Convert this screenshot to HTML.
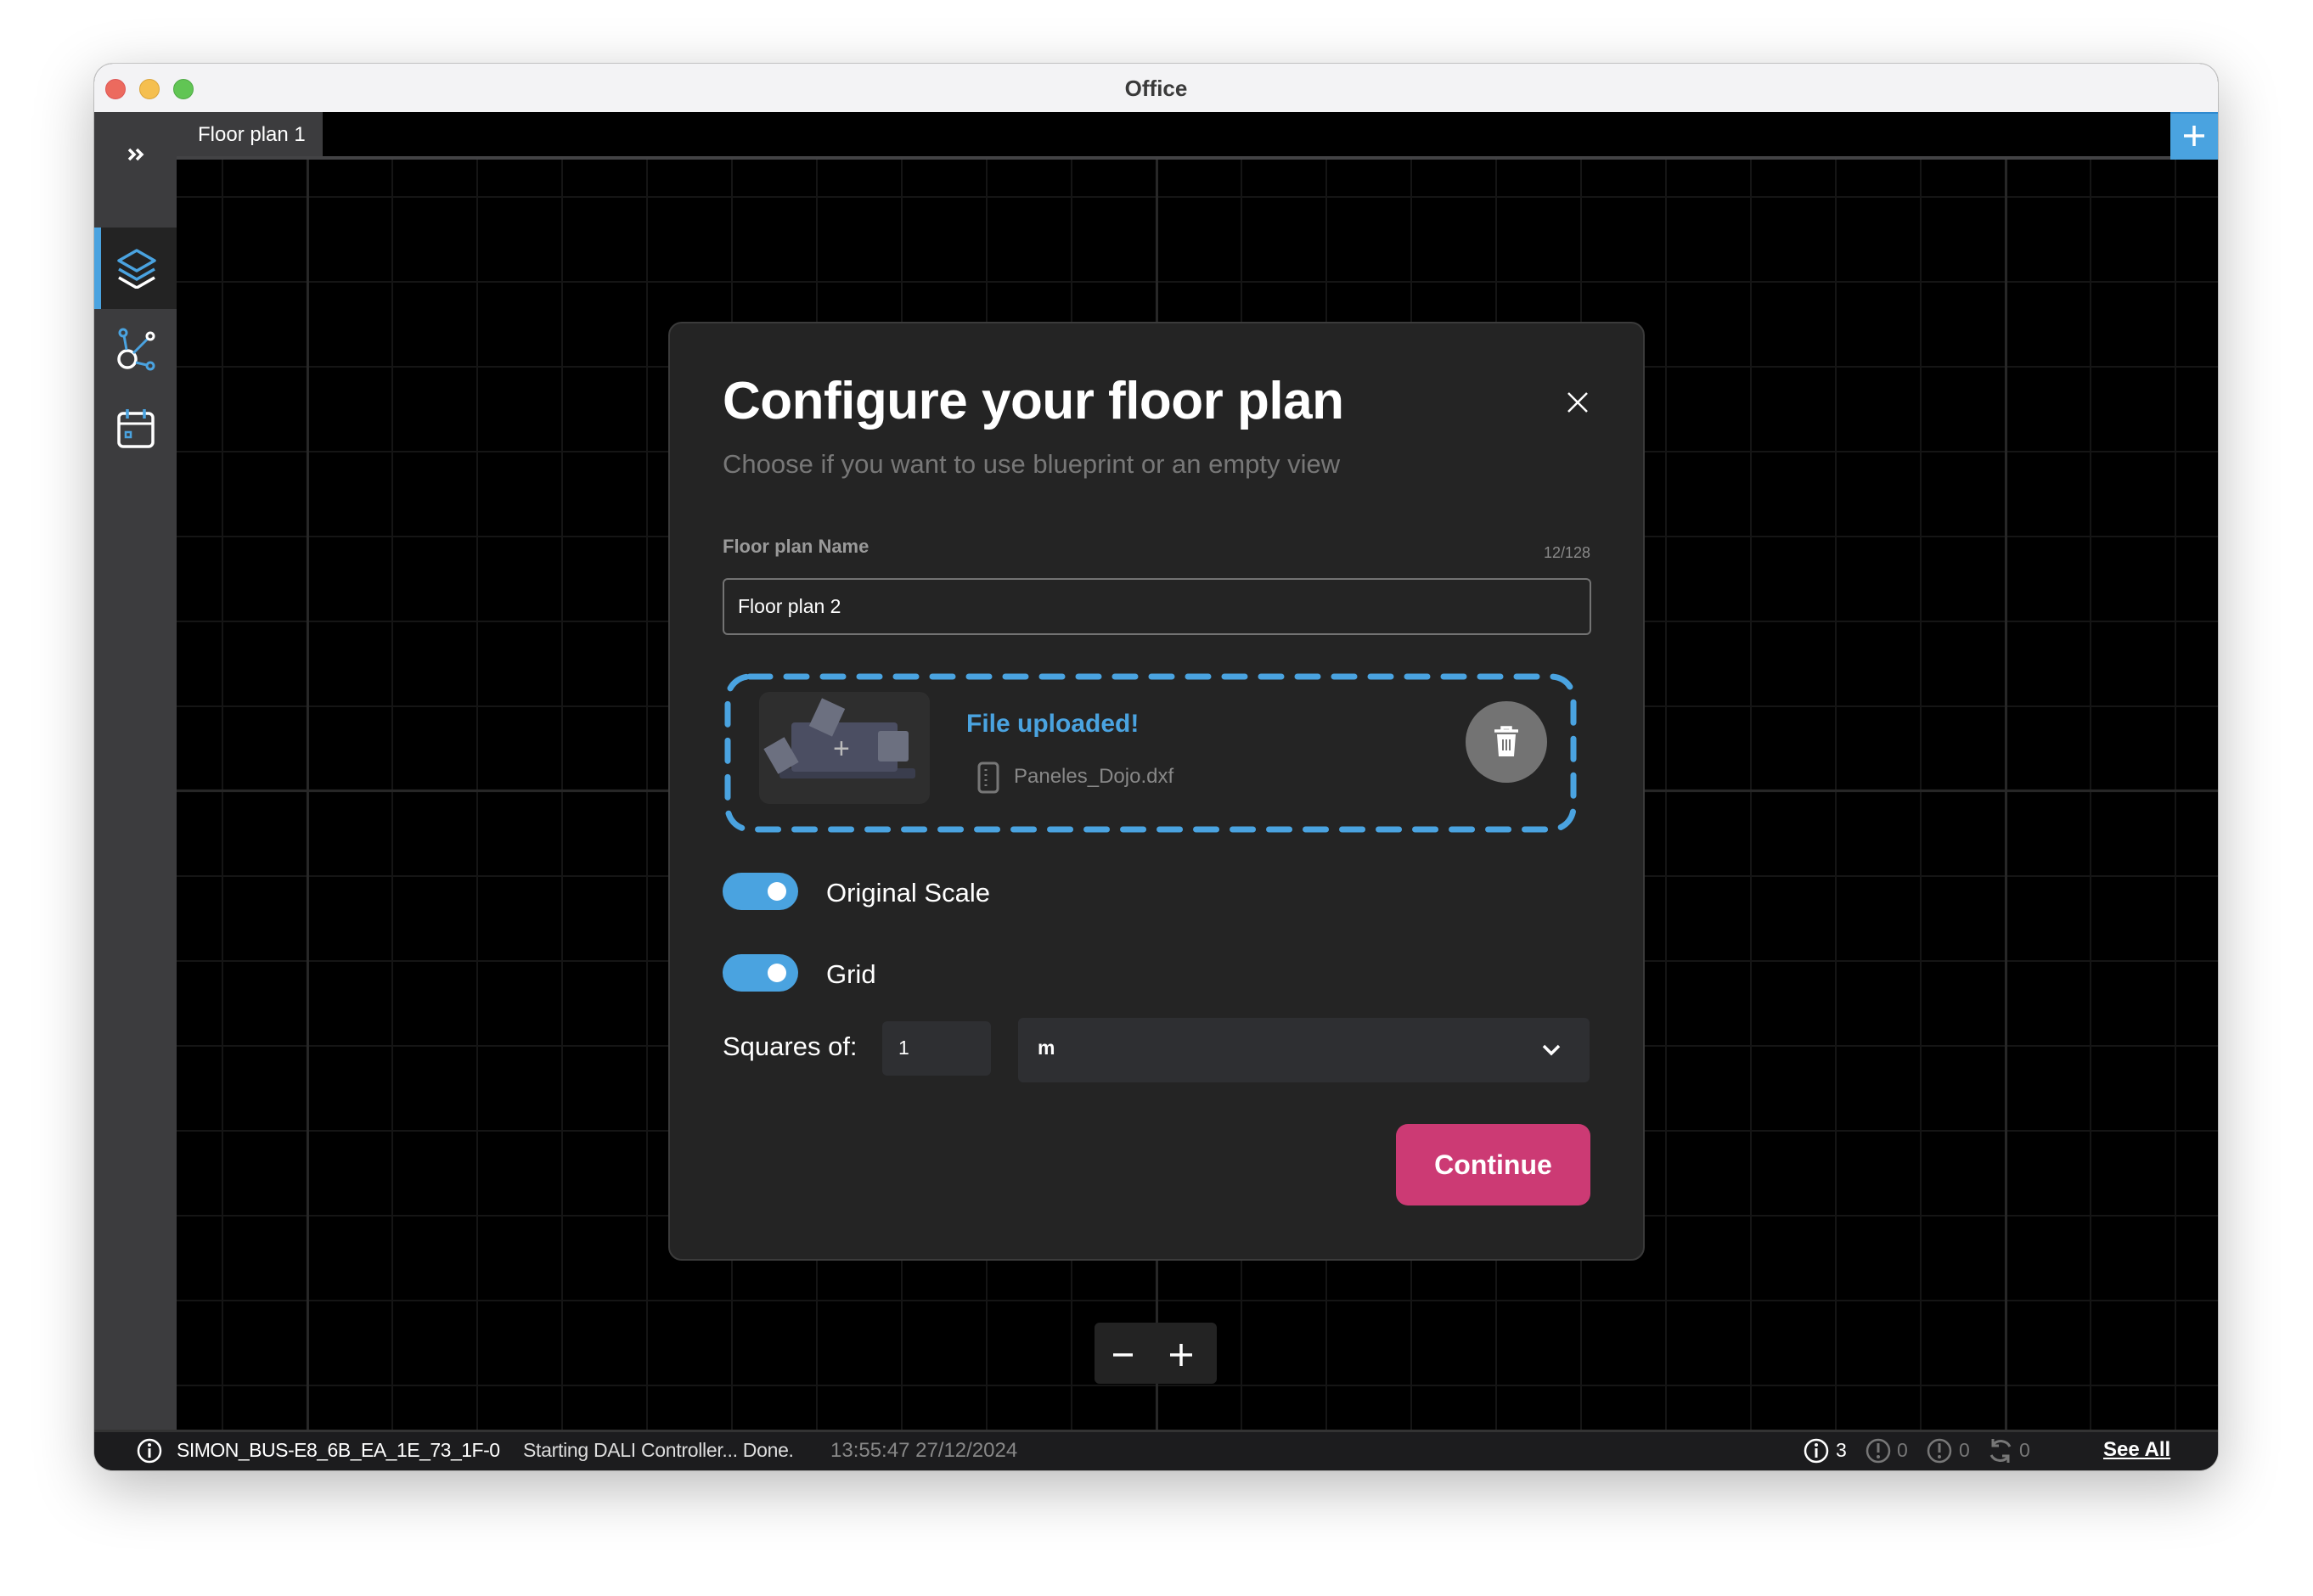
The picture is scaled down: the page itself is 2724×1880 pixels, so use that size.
<!DOCTYPE html>
<html><head><meta charset="utf-8"><style>
*{margin:0;padding:0;box-sizing:border-box}
body{width:2724px;height:1880px;background:#fff;position:relative;overflow:hidden;font-family:"Liberation Sans",sans-serif}
.win{position:absolute;left:111px;top:75px;width:2501px;height:1657px;border-radius:22px;overflow:hidden;box-shadow:0 20px 70px rgba(0,0,0,.28),0 0 0 1px rgba(0,0,0,.18);background:#000}
.titlebar{position:absolute;left:0;top:0;width:100%;height:57px;background:#f3f3f5}
.dot{position:absolute;top:18px;width:24px;height:24px;border-radius:50%}
.title{position:absolute;left:0;right:0;top:14px;text-align:center;font-weight:bold;font-size:26px;color:#3a3a3a}
.abs{position:absolute}
.canvas{position:absolute;left:97px;top:113px;width:2404px;height:1496px;
background-color:#000;
background-image:
linear-gradient(to right,#282828 0,#282828 3px,transparent 3px),
linear-gradient(to bottom,#282828 0,#282828 3px,transparent 3px),
linear-gradient(to right,#151515 0,#151515 2px,transparent 2px),
linear-gradient(to bottom,#151515 0,#151515 2px,transparent 2px);
background-size:1000px 100%,100% 1000px,100px 100%,100% 100px;
background-position:153px 0,0 -258px,53px 0,0 43px}
.modal{position:absolute;left:676px;top:304px;width:1150px;height:1106px;background:#242424;border:2px solid #3b3b3b;border-radius:16px}
.t{position:absolute;white-space:nowrap}
.tog{position:absolute;width:89px;height:44px;border-radius:22px;background:#4aa3e0}
.tog::after{content:"";position:absolute;right:14px;top:11px;width:22px;height:22px;border-radius:50%;background:#fff}
</style></head><body>
<div class="win">
 <div class="titlebar">
  <div class="dot" style="left:13px;background:#ec6a5e;border:1px solid #d55"></div>
  <div class="dot" style="left:53px;background:#f5bf4f;border:1px solid #dba53a"></div>
  <div class="dot" style="left:93px;background:#61c554;border:1px solid #4fa945"></div>
  <div class="title">Office</div>
 </div>
 <div class="abs" style="left:0;top:57px;width:2501px;height:56px;background:#000"></div>
 <div class="abs" style="left:97px;top:109px;width:2404px;height:4px;background:#434345"></div>
 <div class="abs" style="left:97px;top:57px;width:172px;height:52px;background:#3c3c3e"></div>
 <div class="t" style="left:122px;top:70px;font-size:24px;color:#fff">Floor plan 1</div>
 <div class="abs" style="left:2445px;top:57px;width:56px;height:56px;background:#4aa3e0;border-top:2px solid #2f8ad0"></div>
 <svg class="abs" style="left:2459px;top:71px" width="28" height="28"><path d="M14 2V26M2 14H26" stroke="#fff" stroke-width="3.5"/></svg>
 <div class="abs" style="left:0;top:57px;width:97px;height:1552px;background:#3c3c3e"></div>
 <svg class="abs" style="left:38px;top:98px" width="24" height="18"><path d="M3 3L9 9L3 15M12 3L18 9L12 15" stroke="#fff" stroke-width="3.5" fill="none"/></svg>
 <div class="abs" style="left:0;top:193px;width:97px;height:96px;background:#232323"></div>
 <div class="abs" style="left:0;top:193px;width:8px;height:96px;background:#4aa3e0"></div>
 <svg class="abs" style="left:25px;top:215px" width="50" height="50">
  <path d="M25 5L46 17L25 29L4 17Z" stroke="#4aa3e0" stroke-width="3.5" fill="none" stroke-linejoin="round"/>
  <path d="M4 27L25 39L46 27" stroke="#4aa3e0" stroke-width="3.5" fill="none"/>
  <path d="M4 37L25 49L46 37" stroke="#fff" stroke-width="3.5" fill="none"/>
 </svg>
 <svg class="abs" style="left:25px;top:310px" width="52" height="52">
  <circle cx="14" cy="38" r="10" stroke="#fff" stroke-width="3.5" fill="none"/>
  <path d="M10 10L13 27M21 31L38 14M24 42L37 45" stroke="#4aa3e0" stroke-width="3"/>
  <circle cx="9" cy="7" r="4" stroke="#4aa3e0" stroke-width="3" fill="none"/>
  <circle cx="41" cy="11" r="4" stroke="#fff" stroke-width="3" fill="none"/>
  <circle cx="41" cy="46" r="4" stroke="#4aa3e0" stroke-width="3" fill="none"/>
 </svg>
 <svg class="abs" style="left:26px;top:406px" width="46" height="48">
  <rect x="3" y="6" width="40" height="39" rx="5" stroke="#fff" stroke-width="3.5" fill="none"/>
  <path d="M3 18H43" stroke="#fff" stroke-width="3"/>
  <path d="M13 1V12M33 1V12" stroke="#4aa3e0" stroke-width="3.5"/>
  <rect x="11" y="28" width="6" height="6" stroke="#4aa3e0" stroke-width="2.5" fill="none"/>
 </svg>
 <div class="canvas"></div>
 <div class="modal">
  <div class="t" style="left:62px;top:56px;font-size:62px;font-weight:bold;color:#fff;letter-spacing:-0.5px">Configure your floor plan</div>
  <svg class="abs" style="left:1056px;top:80px" width="26" height="26"><path d="M2 2L24 24M24 2L2 24" stroke="#fff" stroke-width="2.5"/></svg>
  <div class="t" style="left:62px;top:148px;font-size:31px;color:#777">Choose if you want to use blueprint or an empty view</div>
  <div class="t" style="left:62px;top:250px;font-size:22px;font-weight:bold;color:#9a9a9a">Floor plan Name</div>
  <div class="t" style="right:62px;top:260px;font-size:18px;color:#8a8a8a">12/128</div>
  <div class="abs" style="left:62px;top:300px;width:1023px;height:67px;border:2px solid #737373;border-radius:6px"></div>
  <div class="t" style="left:80px;top:320px;font-size:23px;color:#fff">Floor plan 2</div>
  <svg class="abs" style="left:62px;top:410px" width="1010" height="192"><rect x="6" y="6" width="996" height="180" rx="26" stroke="#4aa3e0" stroke-width="7" fill="none" stroke-dasharray="24 19" stroke-linecap="round"/></svg>
  <div class="abs" style="left:105px;top:434px;width:201px;height:132px;background:#2e2e2e;border-radius:12px;overflow:hidden">
   <div class="abs" style="left:24px;top:90px;width:160px;height:12px;background:#3a3d4d;border-radius:3px"></div>
   <div class="abs" style="left:38px;top:36px;width:125px;height:58px;background:#4b4e62;border-radius:4px"></div>
   <div class="t" style="left:87px;top:48px;font-size:34px;color:#bbb">+</div>
   <div class="abs" style="left:65px;top:12px;width:30px;height:36px;background:#6c7080;transform:rotate(25deg)"></div>
   <div class="abs" style="left:12px;top:58px;width:28px;height:34px;background:#6c7080;transform:rotate(-30deg)"></div>
   <div class="abs" style="left:140px;top:46px;width:36px;height:36px;background:#6c7080;border-radius:3px"></div>
  </div>
  <div class="t" style="left:349px;top:455px;font-size:30px;font-weight:bold;color:#4aa3e0">File uploaded!</div>
  <svg class="abs" style="left:362px;top:516px" width="26" height="38"><rect x="2" y="2" width="22" height="34" rx="4" stroke="#777" stroke-width="3" fill="none"/><path d="M10 9V11M10 15V17M10 21V23M10 27V29" stroke="#777" stroke-width="3"/></svg>
  <div class="t" style="left:405px;top:520px;font-size:24px;color:#888">Paneles_Dojo.dxf</div>
  <div class="abs" style="left:937px;top:445px;width:96px;height:96px;border-radius:50%;background:#737373"></div>
  <svg class="abs" style="left:969px;top:474px" width="32" height="38"><path d="M2 6H30M11 6V2H21V6" stroke="#fff" stroke-width="3.5" fill="none"/><path d="M5 10H27L25 36H7Z" fill="#fff"/><path d="M12 16V29M16 16V29M20 16V29" stroke="#737373" stroke-width="2"/></svg>
  <div class="tog" style="left:62px;top:647px"></div>
  <div class="t" style="left:184px;top:653px;font-size:31px;color:#fff">Original Scale</div>
  <div class="tog" style="left:62px;top:743px"></div>
  <div class="t" style="left:184px;top:749px;font-size:31px;color:#fff">Grid</div>
  <div class="t" style="left:62px;top:834px;font-size:31px;color:#fff">Squares of:</div>
  <div class="abs" style="left:250px;top:822px;width:128px;height:64px;background:#2e2f32;border-radius:6px"></div>
  <div class="t" style="left:269px;top:840px;font-size:23px;color:#fff">1</div>
  <div class="abs" style="left:410px;top:818px;width:673px;height:76px;background:#2e2f32;border-radius:6px"></div>
  <div class="t" style="left:433px;top:840px;font-size:23px;font-weight:bold;color:#fff">m</div>
  <svg class="abs" style="left:1026px;top:848px" width="24" height="16"><path d="M3 3L12 12L21 3" stroke="#fff" stroke-width="3.5" fill="none"/></svg>
  <div class="abs" style="left:855px;top:943px;width:229px;height:96px;background:#cc3a74;border-radius:14px;color:#fff;font-size:32px;font-weight:bold;text-align:center;line-height:96px">Continue</div>
 </div>
 <div class="abs" style="left:1178px;top:1483px;width:144px;height:72px;background:#232323;border-radius:6px"></div>
 <svg class="abs" style="left:1196px;top:1506px" width="110" height="30"><path d="M4 15H27M84 2V28M71 15H97" stroke="#fff" stroke-width="3.5"/></svg>
 <div class="abs" style="left:0;top:1609px;width:2501px;height:48px;background:#1c1c1e;border-top:3px solid #333"></div>
 <svg class="abs" style="left:49px;top:1618px" width="32" height="32"><circle cx="16" cy="16" r="13" stroke="#fff" stroke-width="2.5" fill="none"/><path d="M16 13V24" stroke="#fff" stroke-width="3"/><circle cx="16" cy="9" r="2" fill="#fff"/></svg>
 <div class="t" style="left:97px;top:1620px;font-size:23px;color:#fff;letter-spacing:-0.5px">SIMON_BUS-E8_6B_EA_1E_73_1F-0</div>
 <div class="t" style="left:505px;top:1620px;font-size:23px;color:#ddd;letter-spacing:-0.3px">Starting DALI Controller... Done.</div>
 <div class="t" style="left:867px;top:1620px;font-size:24px;color:#888">13:55:47 27/12/2024</div>
 <svg class="abs" style="left:2012px;top:1618px" width="32" height="32"><circle cx="16" cy="16" r="13" stroke="#fff" stroke-width="2.5" fill="none"/><path d="M16 13V24" stroke="#fff" stroke-width="3"/><circle cx="16" cy="9" r="2" fill="#fff"/></svg>
 <div class="t" style="left:2051px;top:1620px;font-size:23px;color:#fff">3</div>
 <svg class="abs" style="left:2085px;top:1618px" width="32" height="32"><circle cx="16" cy="16" r="13" stroke="#777" stroke-width="2.5" fill="none"/><path d="M16 7V18" stroke="#777" stroke-width="3"/><circle cx="16" cy="23" r="2" fill="#777"/></svg>
 <div class="t" style="left:2123px;top:1620px;font-size:23px;color:#777">0</div>
 <svg class="abs" style="left:2157px;top:1618px" width="32" height="32"><circle cx="16" cy="16" r="13" stroke="#777" stroke-width="2.5" fill="none"/><path d="M16 7V18" stroke="#777" stroke-width="3"/><circle cx="16" cy="23" r="2" fill="#777"/></svg>
 <div class="t" style="left:2196px;top:1620px;font-size:23px;color:#777">0</div>
 <svg class="abs" style="left:2228px;top:1617px" width="34" height="34"><path d="M8 10A12 12 0 0 1 28 12M26 24A12 12 0 0 1 6 22" stroke="#777" stroke-width="3" fill="none"/><path d="M8 3V11H15M26 31V23H19" stroke="#777" stroke-width="3" fill="none"/></svg>
 <div class="t" style="left:2267px;top:1620px;font-size:23px;color:#777">0</div>
 <div class="t" style="left:2366px;top:1619px;font-size:24px;font-weight:bold;color:#fff;text-decoration:underline">See All</div>
</div>
</body></html>
